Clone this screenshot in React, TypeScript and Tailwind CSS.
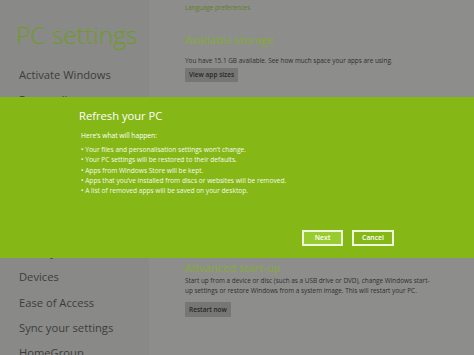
const menu = [
  'Activate Windows',
  'Personalise',
  'Users',
  'Notifications',
  'Search',
  'Share',
  'General',
  'Privacy',
  'Devices',
  'Ease of Access',
  'Sync your settings',
  'HomeGroup',
];

const changes = [
  'Your files and personalisation settings won\u2019t change.',
  'Your PC settings will be restored to their defaults.',
  'Apps from Windows Store will be kept.',
  'Apps that you\u2019ve installed from discs or websites will be removed.',
  'A list of removed apps will be saved on your desktop.',
];

export default function App() {
  return (
    <div className="relative w-[474px] h-[355px] overflow-hidden flex font-['Open_Sans',sans-serif] bg-[#8d8e8c]">
      {/* left nav */}
      <div className="w-[149px] shrink-0 bg-[#898a88] pl-[16px]">
        <h1 className="mt-[20px] text-[24.5px] leading-[30px] font-light text-[#6f9a24] whitespace-nowrap">
          PC settings
        </h1>
        <ul className="mt-[12px] pl-[3px]">
          {menu.map((m) => (
            <li key={m} className="text-[11.2px] leading-[25.3px] text-[#3c3d3b] whitespace-nowrap">
              {m}
            </li>
          ))}
        </ul>
      </div>

      {/* right content */}
      <div className="flex-1 pl-[36px] text-[#2e2f2d]">
        <p className="mt-[3px] text-[6.3px] leading-[10px] text-[#607f26]">Language preferences</p>
        <h2 className="mt-[19px] text-[11.2px] leading-[16px] text-[#86aa36]">Available storage</h2>
        <p className="mt-[8px] text-[6.4px] leading-[10px] whitespace-nowrap">
          You have 15.1 GB available. See how much space your apps are using.
        </p>
        <button className="block mt-[2px] h-[14px] px-[4px] bg-[#767775] text-[6.5px] font-semibold text-[#262725]">
          View app sizes
        </button>

        <h2 className="mt-[178px] text-[11.2px] leading-[16px] text-[#86aa36] whitespace-nowrap">
          Advanced start-up
        </h2>
        <p className="text-[6.4px] leading-[10px] whitespace-nowrap">
          <span className="block">
            Start up from a device or disc (such as a USB drive or DVD), change Windows start-
          </span>
          <span className="block">
            up settings or restore Windows from a system image. This will restart your PC.
          </span>
        </p>
        <button className="block mt-[6px] h-[15px] px-[4px] bg-[#767775] text-[6.5px] font-semibold text-[#262725]">
          Restart now
        </button>
      </div>

      {/* refresh dialog */}
      <div className="absolute left-0 right-0 top-[97px] h-[161px] bg-[#85b817] text-white">
        <div className="ml-[79px] mr-[80px] h-full flex flex-col pt-[11px] pb-[12px]">
          <h3 className="text-[11.2px] leading-[16px]">Refresh your PC</h3>
          <p className="mt-[7px] ml-[2px] text-[6.7px] leading-[10px]">Here&rsquo;s what will happen:</p>
          <ul className="mt-[4px] ml-[2px] text-[6.6px] leading-[10.3px] text-[#f4f9ea]">
            {changes.map((c) => (
              <li key={c} className="whitespace-nowrap">
                &bull; {c}
              </li>
            ))}
          </ul>
          <div className="mt-auto flex justify-end gap-[9px]">
            <button className="w-[41px] h-[16px] border-2 border-[#eef6dc] bg-[#98cb2e] text-[6.8px] font-semibold">
              Next
            </button>
            <button className="w-[42px] h-[16px] border-2 border-[#eef6dc] bg-[#85b817] text-[6.8px] font-semibold">
              Cancel
            </button>
          </div>
        </div>
      </div>
    </div>
  );
}
